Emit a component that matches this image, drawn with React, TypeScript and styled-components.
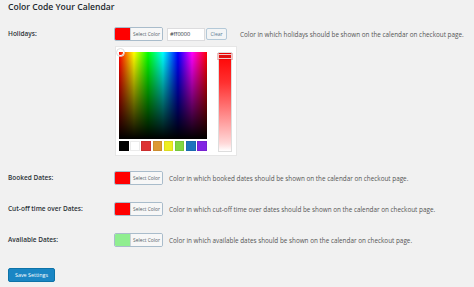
import React from "react";
import styled, { createGlobalStyle } from "styled-components";

const Global = createGlobalStyle`
  html, body { margin: 0; padding: 0; background: #f1f1f1; }
  body { font-family: "Open Sans", "Noto Sans", "Liberation Sans", sans-serif; color: #23282d; }
`;

const Page = styled.div`
  width: 474px;
  height: 287px;
  box-sizing: border-box;
  padding: 2px 8px 0 8px;
  overflow: hidden;
`;

const Title = styled.h2`
  margin: 0 0 0 0;
  font-size: 8.6px;
  line-height: 11px;
  font-weight: 600;
  color: #23282d;
`;

const Form = styled.div`
  display: flex;
  flex-direction: column;
  margin-top: 14px;
`;

const Row = styled.div<{ $after: number }>`
  display: grid;
  grid-template-columns: 106px 1fr;
  align-items: start;
  padding-bottom: ${(p) => p.$after}px;
`;

const Label = styled.div`
  font-size: 6.5px;
  line-height: 14px;
  font-weight: 600;
  color: #2c3338;
`;

const Field = styled.div`
  display: flex;
  flex-direction: column;
`;

const Controls = styled.div`
  display: flex;
  align-items: center;
  height: 14px;
`;

const ColorButton = styled.div`
  display: flex;
  height: 14px;
  width: 49px;
  box-sizing: border-box;
  border: 1px solid #a9bccb;
  border-radius: 2px;
  overflow: hidden;
  background: #f7f7f7;
`;

const Swatch = styled.div<{ $color: string }>`
  width: 15px;
  background: ${(p) => p.$color};
  border-right: 1px solid #c9d3da;
`;

const ButtonText = styled.div`
  flex: 1;
  display: flex;
  align-items: center;
  justify-content: center;
  font-size: 4.9px;
  color: #555d66;
  background: #f7f7f7;
`;

const HexInput = styled.div`
  margin-left: 4px;
  width: 38px;
  height: 13px;
  box-sizing: border-box;
  border: 1px solid #dcdcde;
  background: #fff;
  font-size: 5.6px;
  line-height: 11px;
  padding-left: 2px;
  color: #32373c;
`;

const ClearButton = styled.div`
  margin-left: 1px;
  width: 21px;
  height: 12px;
  box-sizing: border-box;
  border: 1px solid #b4c9d8;
  border-radius: 2px;
  background: #f3f5f6;
  font-size: 5px;
  line-height: 10px;
  text-align: center;
  color: #5b7b93;
`;

const Description = styled.div<{ $gap: number }>`
  margin-left: ${(p) => p.$gap}px;
  font-size: 6.35px;
  color: #555;
  white-space: nowrap;
`;

const Picker = styled.div`
  margin-top: 5px;
  margin-left: 1px;
  width: 122px;
  height: 110px;
  box-sizing: border-box;
  background: #fff;
  border: 1px solid #e6e6e6;
  display: flex;
  padding: 5px 4px 0 3px;
  gap: 11px;
`;

const PickerMain = styled.div`
  display: flex;
  flex-direction: column;
  gap: 2px;
`;

const Square = styled.div`
  position: relative;
  width: 88px;
  height: 87px;
  background:
    linear-gradient(to bottom, rgba(0,0,0,0), rgba(0,0,0,0.55) 55%, #000),
    linear-gradient(to right, #f00, #ff0 17%, #0f0 33%, #0ff 50%, #00f 67%, #f0f 83%, #f00);
`;

const Marker = styled.div`
  position: absolute;
  left: -3px;
  top: -4px;
  width: 7px;
  height: 7px;
  border-radius: 50%;
  border: 1px solid #ddd;
  box-shadow: inset 0 0 0 1px #fff;
  background: transparent;
`;

const Palette = styled.div`
  display: flex;
  gap: 1.7px;
`;

const PaletteItem = styled.div<{ $color: string }>`
  width: 9.5px;
  height: 10px;
  background: ${(p) => p.$color};
  box-shadow: inset 0 0 0 1px rgba(0,0,0,0.08);
`;

const Strip = styled.div`
  position: relative;
  margin-top: 0px;
  width: 14px;
  height: 100px;
  box-sizing: border-box;
  border: 1px solid #ddd;
  background: linear-gradient(to bottom, #f00, #ff3030 30%, #ffd8d8 92%, #fff);
`;

const StripHandle = styled.div`
  position: absolute;
  left: -1px;
  right: -1px;
  top: 1px;
  height: 5px;
  box-sizing: border-box;
  background: #e01010;
  border: 1px solid #f0c8c8;
  box-shadow: 0 0 0 1px rgba(180, 0, 0, 0.25);
`;

const SaveButton = styled.div`
  width: 47px;
  height: 14px;
  border-radius: 2px;
  background: #1a86c4;
  border: 1px solid #0d73a8;
  box-sizing: border-box;
  color: #fff;
  font-size: 5.4px;
  line-height: 12px;
  text-align: center;
`;

const palette = ["#000000", "#ffffff", "#dd3333", "#dd9933", "#eeee22", "#81d742", "#1e73be", "#8224e3"];

const rows = [
  { label: "Booked Dates:", color: "#ff0000", text: "Color in which booked dates should be shown on the calendar on checkout page.", after: 17 },
  { label: "Cut-off time over Dates:", color: "#ff0000", text: "Color in which cut-off time over dates should be shown on the calendar on checkout page.", after: 17 },
  { label: "Available Dates:", color: "#90ee90", text: "Color in which available dates should be shown on the calendar on checkout page.", after: 21 },
];

export default function App() {
  return (
    <Page>
      <Global />
      <Title>Color Code Your Calendar</Title>
      <Form>
        <Row $after={15}>
          <Label>Holidays:</Label>
          <Field>
            <Controls>
              <ColorButton>
                <Swatch $color="#ff0000" />
                <ButtonText>Select Color</ButtonText>
              </ColorButton>
              <HexInput>#ff0000</HexInput>
              <ClearButton>Clear</ClearButton>
              <Description $gap={13}>Color in which holidays should be shown on the calendar on checkout page.</Description>
            </Controls>
            <Picker>
              <PickerMain>
                <Square>
                  <Marker />
                </Square>
                <Palette>
                  {palette.map((c) => (
                    <PaletteItem key={c} $color={c} />
                  ))}
                </Palette>
              </PickerMain>
              <Strip>
                <StripHandle />
              </Strip>
            </Picker>
          </Field>
        </Row>
        {rows.map((r) => (
          <Row key={r.label} $after={r.after}>
            <Label>{r.label}</Label>
            <Field>
              <Controls>
                <ColorButton>
                  <Swatch $color={r.color} />
                  <ButtonText>Select Color</ButtonText>
                </ColorButton>
                <Description $gap={6}>{r.text}</Description>
              </Controls>
            </Field>
          </Row>
        ))}
      </Form>
      <SaveButton>Save Settings</SaveButton>
    </Page>
  );
}
